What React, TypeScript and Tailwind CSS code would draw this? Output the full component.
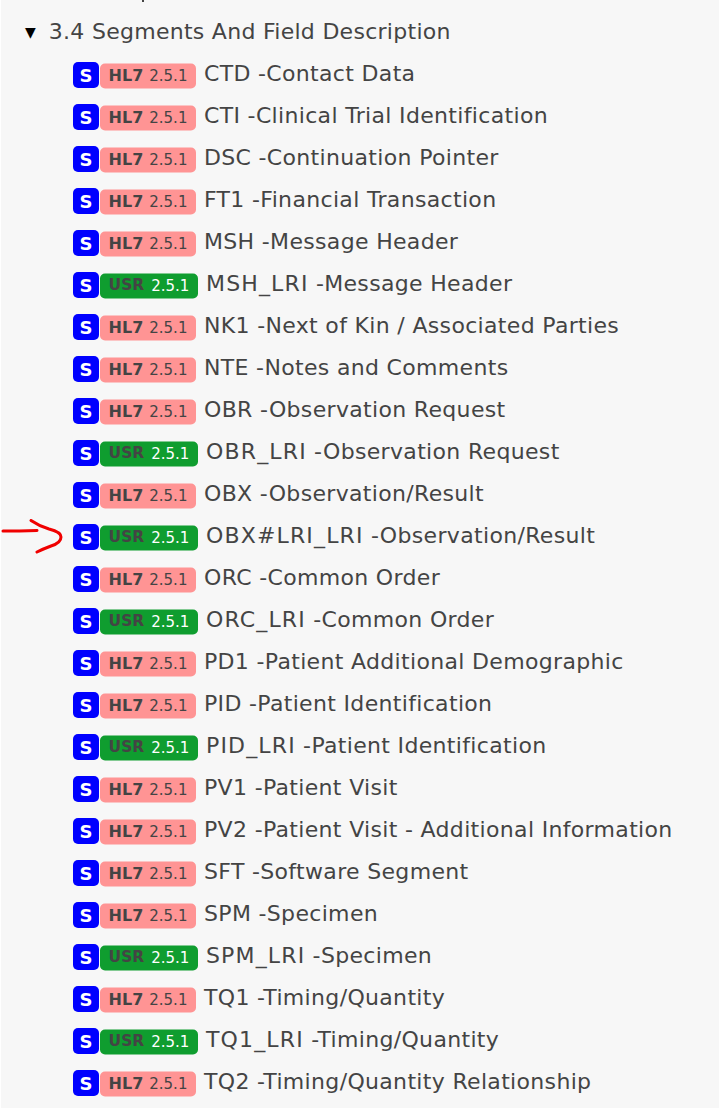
import React from 'react';

type Segment = { code: string; name: string; usr?: boolean };

const segments: Segment[] = [
  { code: 'CTD', name: 'Contact Data' },
  { code: 'CTI', name: 'Clinical Trial Identification' },
  { code: 'DSC', name: 'Continuation Pointer' },
  { code: 'FT1', name: 'Financial Transaction' },
  { code: 'MSH', name: 'Message Header' },
  { code: 'MSH_LRI', name: 'Message Header', usr: true },
  { code: 'NK1', name: 'Next of Kin / Associated Parties' },
  { code: 'NTE', name: 'Notes and Comments' },
  { code: 'OBR', name: 'Observation Request' },
  { code: 'OBR_LRI', name: 'Observation Request', usr: true },
  { code: 'OBX', name: 'Observation/Result' },
  { code: 'OBX#LRI_LRI', name: 'Observation/Result', usr: true },
  { code: 'ORC', name: 'Common Order' },
  { code: 'ORC_LRI', name: 'Common Order', usr: true },
  { code: 'PD1', name: 'Patient Additional Demographic' },
  { code: 'PID', name: 'Patient Identification' },
  { code: 'PID_LRI', name: 'Patient Identification', usr: true },
  { code: 'PV1', name: 'Patient Visit' },
  { code: 'PV2', name: 'Patient Visit - Additional Information' },
  { code: 'SFT', name: 'Software Segment' },
  { code: 'SPM', name: 'Specimen' },
  { code: 'SPM_LRI', name: 'Specimen', usr: true },
  { code: 'TQ1', name: 'Timing/Quantity' },
  { code: 'TQ1_LRI', name: 'Timing/Quantity', usr: true },
  { code: 'TQ2', name: 'Timing/Quantity Relationship' },
];

const SegmentRow: React.FC<{ segment: Segment; marked: boolean }> = ({ segment, marked }) => (
  <li className="relative flex h-[42px] items-center pl-[72px]">
    {marked && (
      <svg className="absolute left-0 top-[5px] h-[36px] w-[64px]" viewBox="0 0 64 36" fill="none">
        <path
          d="M2 12 Q18 12 36 11.5 M30 1.5 Q38 7 48 10 Q60 13 60 18 Q60 24 50 27 Q42 30 36 33"
          stroke="#f00000"
          strokeWidth="3"
          strokeLinecap="round"
          strokeLinejoin="round"
        />
      </svg>
    )}
    <span className="flex h-[26px] w-[26px] translate-y-[2px] items-center justify-center rounded-[5px] bg-[#0000ff] text-[18px] font-bold text-white">
      S
    </span>
    {segment.usr ? (
      <span className="ml-px flex h-[25px] w-[98px] translate-y-[2.5px] items-center justify-center rounded-[5px] bg-[#0f9d2f] text-[15.5px] font-bold text-[#444444]">
        USR<span className="ml-[7px] text-[15px] font-normal text-white">2.5.1</span>
      </span>
    ) : (
      <span className="ml-px flex h-[25px] w-[96px] translate-y-[2.5px] items-center justify-center rounded-[5px] bg-[#ff9494] text-[16px] font-bold text-[#444444]">
        HL7<span className="ml-[6px] text-[15px] font-normal">2.5.1</span>
      </span>
    )}
    <span className="ml-2 whitespace-nowrap text-[22px] tracking-[0.33px] text-[#444444]">
      {/* the underscore runs wider in the reference's font */}
      <span className={segment.usr ? 'tracking-[1.15px]' : ''}>{segment.code}</span> -{segment.name}
    </span>
  </li>
);

export default function App() {
  return (
    <div className="h-[1109px] w-[719px] overflow-hidden bg-white pb-px pl-px font-['DejaVu_Sans',sans-serif]">
      <div className="relative h-full bg-[#f7f7f7] pt-[10px]">
        {/* tail of the line scrolled off above */}
        <div className="absolute left-[141px] top-0 h-[2px] w-[2px] bg-[#444444]" />
        <div className="flex h-[42px] items-center pl-[24px]">
          <span className="translate-y-px text-[14px] leading-none text-black">▼</span>
          <span className="ml-[13px] text-[22px] tracking-[0.28px] text-[#444444]">3.4 Segments And Field Description</span>
        </div>
        <ul>
          {segments.map((segment) => (
            <SegmentRow key={segment.code} segment={segment} marked={segment.code === 'OBX#LRI_LRI'} />
          ))}
        </ul>
      </div>
    </div>
  );
}
